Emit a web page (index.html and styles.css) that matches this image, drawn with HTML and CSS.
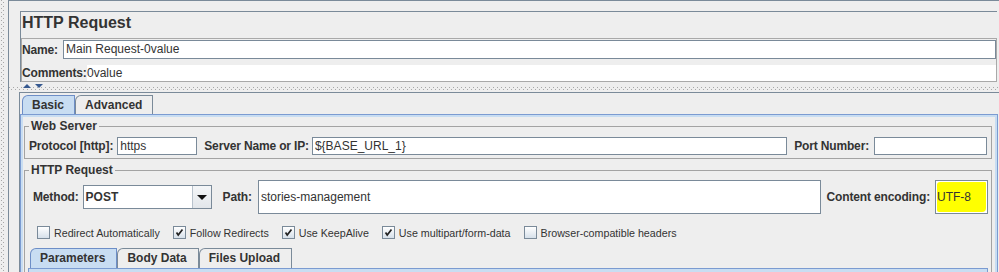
FILE: index.html
```html
<!DOCTYPE html>
<html lang="en">
<head>
    <meta charset="UTF-8">
    <title>HTTP Request</title>
    <link rel="stylesheet" href="styles.css">
</head>
<body>
    <div class="frame">
        <div class="dots"></div>
        <div class="main">
            <div class="title-panel">
                <h1>HTTP Request</h1>
                <div class="name-box">
                    <div class="name-row">
                        <label>Name:</label>
                        <div class="field">Main Request-0value</div>
                    </div>
                    <div class="comments-row">
                        <label>Comments:</label>
                        <div class="area">0value</div>
                    </div>
                </div>
            </div>

            <div class="splitter">
                <span class="arrow up"></span>
                <span class="arrow down"></span>
            </div>

            <div class="tabs-panel">
                <div class="tab-strip">
                    <div class="tab active">Basic</div>
                    <div class="tab">Advanced</div>
                </div>
                <div class="tab-body">
                    <fieldset class="group web">
                        <legend>Web Server</legend>
                        <div class="ws-row">
                            <label>Protocol [http]:</label>
                            <div class="field protocol">https</div>
                            <label class="server-label">Server Name or IP:</label>
                            <div class="field server">${BASE_URL_1}</div>
                            <label class="port-label">Port Number:</label>
                            <div class="field port"></div>
                        </div>
                    </fieldset>

                    <fieldset class="group req">
                        <legend>HTTP Request</legend>
                        <div class="method-row">
                            <label>Method:</label>
                            <div class="combo">
                                <div class="combo-value">POST</div>
                                <div class="combo-btn"><span class="caret"></span></div>
                            </div>
                            <label class="path-label">Path:</label>
                            <div class="field path">stories-management</div>
                            <label class="enc-label">Content encoding:</label>
                            <div class="field enc"><span class="marker">UTF-8</span></div>
                        </div>

                        <div class="check-row">
                            <div class="cb"><span class="box"></span>Redirect Automatically</div>
                            <div class="cb"><span class="box"><svg viewBox="0 0 13 13"><path d="M3 6.5 L5 9.5 L10 3"/></svg></span>Follow Redirects</div>
                            <div class="cb"><span class="box"><svg viewBox="0 0 13 13"><path d="M3 6.5 L5 9.5 L10 3"/></svg></span>Use KeepAlive</div>
                            <div class="cb"><span class="box"><svg viewBox="0 0 13 13"><path d="M3 6.5 L5 9.5 L10 3"/></svg></span>Use multipart/form-data</div>
                            <div class="cb"><span class="box"></span>Browser-compatible headers</div>
                        </div>

                        <div class="sub-pane">
                            <div class="sub-strip">
                                <div class="tab active">Parameters</div>
                                <div class="tab">Body Data</div>
                                <div class="tab">Files Upload</div>
                            </div>
                            <div class="sub-body"></div>
                        </div>
                    </fieldset>
                </div>
            </div>
        </div>
    </div>
</body>
</html>
```

FILE: styles.css
```css
:root {
    --line: #7a8a99;
    --group: #a3a3a3;
    --tab-blue: #c8ddf2;
    --tab-edge: #7b9bd1;
    --text: #333333;
}
* { box-sizing: border-box; margin: 0; padding: 0; }
body {
    background: #eeeeee;
    font-family: 'Liberation Sans', Arial, sans-serif;
    font-size: 12px; color: var(--text);
    width: 999px; height: 272px; overflow: hidden;
}
label { font-weight: bold; white-space: nowrap; letter-spacing: -0.15px; }

.frame { display: flex; height: 100%; }
.dots {
    width: 5px; margin-right: 3px; flex: none;
    background-image:
        conic-gradient(at 1px 1px, transparent 75%, #a8a8a8 0),
        conic-gradient(at 1px 1px, transparent 75%, #a8a8a8 0);
    background-size: 4px 4px;
    background-position: 1px 0, 3px 2px;
}
.main { flex: 1; border-top: 1px solid var(--line); border-left: 1px solid var(--line); }

/* title + name/comments */
.title-panel {
    margin: 10px 2px 0 11px;
    border-top: 1px solid var(--line); border-left: 1px solid var(--line);
}
h1 { font-size: 16px; height: 26px; line-height: 21px; padding-left: 1px; }
.name-box { border: 1px solid #a9a9a9; height: 44px; padding-top: 1px; }
.name-row { display: flex; align-items: center; height: 19px; }
.name-row label { width: 41px; flex: none; }
.field {
    background: #fff; border: 1px solid var(--line);
    padding-left: 2px; white-space: nowrap; overflow: hidden;
}
.name-row .field { flex: 1; height: 19px; line-height: 17px; }
.comments-row { display: flex; align-items: center; height: 16px; margin-top: 6px; }
.comments-row label { width: 65px; flex: none; }
.area { flex: 1; height: 16px; line-height: 16px; background: #fff; }

/* splitter */
.splitter {
    height: 10px; display: flex; gap: 3px; padding: 2px 0 0 14px;
    background-image:
        conic-gradient(at 1px 1px, transparent 75%, #a8a8a8 0),
        conic-gradient(at 1px 1px, transparent 75%, #a8a8a8 0);
    background-size: 4px 1px;
    background-repeat: repeat-x;
    background-position: 0 5px, 2px 7px;
}
.arrow {
    width: 0; height: 0;
    border-left: 4px solid transparent; border-right: 4px solid transparent;
}
.arrow.up { border-bottom: 4px solid #35588f; }
.arrow.down { border-top: 4px solid #35588f; margin-left: 1px; }

/* main tabs */
.tabs-panel {
    margin-left: 10px;
    border-top: 1px solid var(--line); border-left: 1px solid var(--line);
}
.tab-strip { display: flex; height: 21px; padding: 2px 0 0 2px; }
.tab {
    height: 19px; line-height: 18px; padding: 0 10px 0 9px;
    border: 1px solid var(--line); border-bottom: none;
    border-top-left-radius: 6px;
    font-weight: bold; white-space: nowrap;
}
.tab.active { background: var(--tab-blue); border-color: #6d8ec7; }
.tab-body {
    margin-right: 1px; height: 200px;
    border: 1px solid var(--tab-edge);
    box-shadow: inset 0 0 0 2px var(--tab-blue);
    padding: 4px 5px 0 3px;
}

/* titled groups */
.group { border: 1px solid var(--group); min-width: 0; }
.group legend { font-weight: bold; line-height: 14px; padding: 0 2px; }
.web { padding: 0 4px 3px 4px; }
.req { padding: 0 3px 3px 3px; margin-top: 4px; }
.req legend { margin-left: 1px; }

.ws-row { display: flex; align-items: center; height: 18px; margin-top: 4px; }
.ws-row .field { height: 18px; line-height: 16px; }
.protocol { width: 80px; margin-left: 4px; flex: none; }
.server-label { margin-left: 7px; }
.server { flex: 1; margin-left: 3px; }
.port-label { margin-left: 7px; }
.port { width: 113px; margin-left: 5px; flex: none; }

.method-row { display: flex; align-items: center; height: 34px; margin-top: 3px; padding-left: 5px; }
.combo {
    display: flex; width: 129px; height: 24px; margin-left: 4px; flex: none;
    border: 1px solid var(--line); background: #fff;
}
.combo-value { flex: 1; font-weight: bold; line-height: 22px; padding-left: 2px; }
.combo-btn {
    width: 19px; display: flex; align-items: center; justify-content: center;
    border-left: 1px solid #b8c2cc;
    background: linear-gradient(#f4f6f8, #e2e6ea);
}
.caret {
    width: 0; height: 0;
    border-left: 5px solid transparent; border-right: 5px solid transparent;
    border-top: 5px solid #111;
}
.path-label { margin-left: 11px; }
.path { flex: 1; height: 34px; line-height: 32px; margin-left: 6px; }
.enc-label { margin-left: 6px; }
.enc { width: 53px; height: 34px; margin-left: 5px; padding: 1px; flex: none; }
.marker {
    display: block; height: 100%; line-height: 30px;
    background: #ffff00; border-radius: 3px 1px 4px 2px;
}

/* checkboxes */
.check-row {
    display: flex; align-items: center; gap: 13px;
    margin-top: 12px; padding-left: 9px; height: 13px;
    font-size: 10.7px;
}
.cb { display: flex; align-items: center; gap: 4px; white-space: nowrap; }
.box {
    width: 13px; height: 13px; flex: none;
    border: 1px solid var(--line);
    background: linear-gradient(#ffffff, #d6e0ea);
}
.box svg { display: block; width: 11px; height: 11px; }
.box path { fill: none; stroke: #222; stroke-width: 2; }

/* sub tabs */
.sub-pane { margin-top: 9px; }
.sub-strip { display: flex; height: 20px; padding-left: 2px; }
.sub-strip .tab { height: 20px; line-height: 19px; padding: 0 11px 0 9px; }
.sub-body {
    height: 20px;
    border-top: 1px solid var(--tab-edge); border-left: 1px solid var(--tab-edge);
    border-right: 1px solid var(--tab-edge);
    background: linear-gradient(var(--tab-blue) 3px, #eeeeee 3px);
}
```
